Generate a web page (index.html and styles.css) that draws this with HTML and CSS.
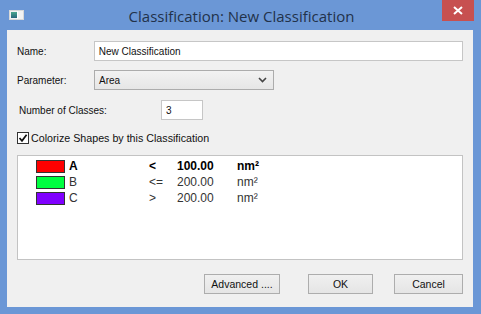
FILE: index.html
```html
<!DOCTYPE html>
<html>
<head>
<meta charset="utf-8">
<link rel="stylesheet" href="styles.css">
</head>
<body>
<div class="window">
  <div class="titlebar">
    <div class="appicon"><span class="ic-l"></span><span class="ic-r"></span></div>
    <div class="title">Classification: New Classification</div>
    <div class="close"><svg width="10" height="9" viewBox="0 0 10 9"><path d="M1 1 L9 8 M9 1 L1 8" stroke="#fff" stroke-width="2" fill="none"/></svg></div>
  </div>
  <div class="client">
    <div class="row r-name">
      <span class="lbl lbl-w">Name:</span>
      <div class="field name-field">New Classification</div>
    </div>
    <div class="row r-param">
      <span class="lbl lbl-w">Parameter:</span>
      <div class="combo">
        <span>Area</span>
        <svg class="chev" width="9" height="6" viewBox="0 0 9 6"><path d="M1 1 L4.5 4.5 L8 1" stroke="#444" stroke-width="1.6" fill="none"/></svg>
      </div>
    </div>
    <div class="row r-num">
      <span class="lbl lbl-num">Number of Classes:</span>
      <div class="field num-field">3</div>
    </div>
    <div class="row r-check">
      <span class="checkbox"><svg width="10" height="10" viewBox="0 0 10 10"><path d="M1.5 5 L4 7.8 L8.6 1.8" stroke="#111" stroke-width="1.7" fill="none"/></svg></span>
      <span class="lbl check-lbl">Colorize Shapes by this Classification</span>
    </div>
    <div class="list">
      <div class="item bold">
        <span class="sw" style="background:#ff0000"></span>
        <span class="c-name">A</span>
        <span class="c-op">&lt;</span>
        <span class="c-val">100.00</span>
        <span class="c-unit">nm²</span>
      </div>
      <div class="item">
        <span class="sw" style="background:#00ff40"></span>
        <span class="c-name">B</span>
        <span class="c-op">&lt;=</span>
        <span class="c-val">200.00</span>
        <span class="c-unit">nm²</span>
      </div>
      <div class="item">
        <span class="sw" style="background:#8000ff"></span>
        <span class="c-name">C</span>
        <span class="c-op">&gt;</span>
        <span class="c-val">200.00</span>
        <span class="c-unit">nm²</span>
      </div>
    </div>
    <div class="buttons">
      <div class="btn b-adv">Advanced ....</div>
      <div class="btn b-ok">OK</div>
      <div class="btn b-cancel">Cancel</div>
    </div>
  </div>
</div>
</body>
</html>
```
FILE: styles.css
```css
html, body {
  margin: 0;
  padding: 0;
}
body {
  width: 481px;
  height: 314px;
  overflow: hidden;
  font-family: "Liberation Sans", Arial, sans-serif;
  font-size: 10px;
  color: #111;
}
.window {
  width: 481px;
  height: 314px;
  background: #6b97d6;
  display: flex;
  flex-direction: column;
  box-sizing: border-box;
}
.titlebar {
  height: 30px;
  position: relative;
  display: flex;
  align-items: center;
  justify-content: center;
}
.appicon {
  position: absolute;
  left: 9px;
  top: 10px;
  width: 15px;
  height: 10px;
  display: flex;
  background: #f2f2f2;
  border: 1px solid #d8d8d8;
  box-sizing: border-box;
}
.ic-l {
  width: 6px;
  margin: 1px 0 1px 1px;
  background: linear-gradient(#4ba68e, #27667c);
}
.ic-r {
  flex: 1;
  border-left: 1px solid #fff;
}
.title {
  font-family: "Open Sans", "Noto Sans", sans-serif;
  font-size: 15px;
  color: #22324a;
  margin-top: 2px;
  margin-left: 2px;
}
.close {
  position: absolute;
  right: 7px;
  top: 0;
  width: 32px;
  height: 21px;
  background: #c75050;
  display: flex;
  align-items: center;
  justify-content: center;
}
.client {
  margin: 0 8px 7px 7px;
  flex: 1;
  background: #f0f0f0;
  display: flex;
  flex-direction: column;
  padding: 0 10px 0 10px;
}
.row {
  display: flex;
  align-items: center;
  height: 20px;
}
.r-name { margin-top: 11px; }
.r-param { margin-top: 9px; }
.r-num { margin-top: 10px; }
.r-check { margin-top: 12px; height: 12px; }
.lbl-w { width: 77px; }
.lbl-num { width: 144px; padding-left: 2px; box-sizing: border-box; }
.lbl { white-space: nowrap; }
.check-lbl { font-size: 10.7px; }
.field {
  height: 20px;
  box-sizing: border-box;
  border: 1px solid #c6c6c6;
  background: #fff;
  display: flex;
  align-items: center;
  padding-left: 4px;
}
.name-field { width: 370px; }
.num-field { width: 42px; }
.combo {
  width: 180px;
  height: 20px;
  box-sizing: border-box;
  border: 1px solid #acacac;
  background: linear-gradient(#f2f2f2, #e6e6e6);
  display: flex;
  align-items: center;
  justify-content: space-between;
  padding: 0 6px 0 4px;
}
.checkbox {
  width: 12px;
  height: 12px;
  box-sizing: border-box;
  border: 1px solid #333;
  background: #fff;
  display: flex;
  align-items: center;
  justify-content: center;
  margin-right: 2px;
}
.list {
  margin-top: 11px;
  width: 446px;
  height: 105px;
  box-sizing: border-box;
  border: 1px solid #c3c3c3;
  background: #fff;
  padding-top: 2px;
}
.item {
  display: flex;
  align-items: center;
  height: 16px;
  font-size: 12px;
  color: #333;
}
.item.bold { font-weight: bold; color: #000; }
.sw {
  width: 29px;
  height: 13px;
  box-sizing: border-box;
  border: 1px solid #333;
  margin-left: 18px;
  margin-right: 4px;
}
.c-name { width: 80px; }
.c-op { width: 28px; }
.c-val { width: 60px; }
.buttons {
  margin-top: 14px;
  display: flex;
  padding-left: 187px;
}
.btn {
  height: 20px;
  box-sizing: border-box;
  border: 1px solid #adadad;
  background: linear-gradient(#f0f0f0, #e5e5e5);
  display: flex;
  align-items: center;
  justify-content: center;
  font-size: 10.5px;
  color: #111;
}
.b-adv { width: 76px; }
.b-ok { width: 65px; margin-left: 28px; }
.b-cancel { width: 69px; margin-left: 21px; }
```
